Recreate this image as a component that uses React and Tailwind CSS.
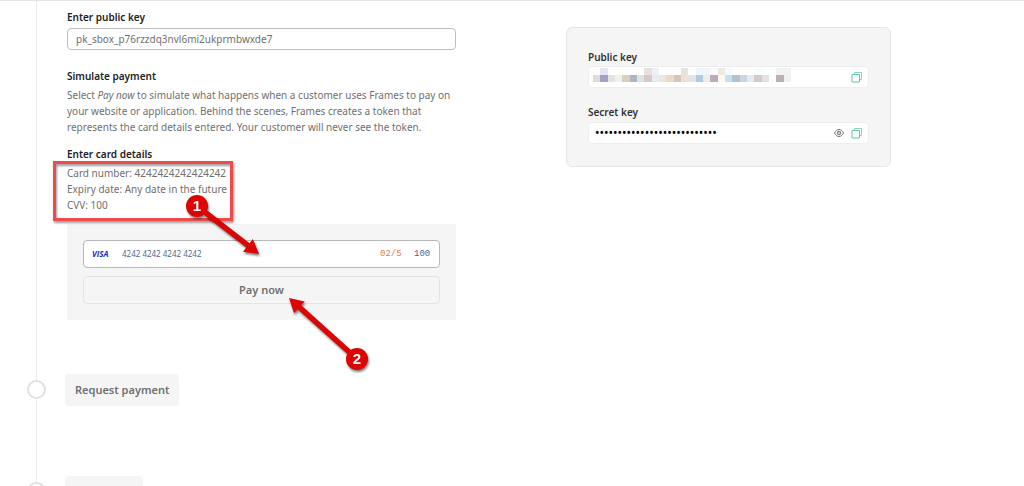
import { useState } from "react"

// colour strips that hide the public key, one entry per block
const MOSAIC_TOP = [
  "#fefefe", "#e6e6f2", "#ffffff", "#fefef4", "#ffffff", "#ffffff", "#ffffff", "#e6e2e2", "#eef0f6",
  "#ffffff", "#ffffff", "#fefefe", "#e6e2de", "#ffffff", "#ecf6fe", "#f2f6fa", "#fafafe", "#eeeae2",
  "#f4fafe", "#ffffff", "#ffffff", "#ffffff", "#fafcfe", "#ffffff", "#ffffff", "#f2f2f0", "#f2f2f0",
]
const MOSAIC_BOTTOM = [
  "#dedcd6", "#a2a2c6", "#e6e2de", "#e8f6f0", "#dacec0", "#b0b4c4", "#dce4e4", "#dac8c8", "#e6ecf2",
  "#ece6de", "#eadaca", "#d6c6b6", "#ece2d8", "#e4e4e4", "#b4cae0", "#eeeee8", "#bcaaba", "#fefaf2",
  "#c2e2f0", "#b0c2d2", "#ccd4e0", "#e4ecf2", "#d6cac6", "#e2e2e0", "#fcfefe", "#bab0b6", "#f0f0f0",
]

function CopyIcon() {
  return (
    <svg viewBox="0 0 12 12" className="w-3 h-3" fill="none" stroke="#5cc4a0">
      <path d="M3.5 3V1.5h7v7H9" strokeOpacity="0.7" />
      <rect x="1" y="3.5" width="7.5" height="7.5" rx="0.5" />
    </svg>
  )
}

function EyeIcon() {
  return (
    <svg viewBox="0 0 12 12" className="w-3 h-3" fill="none" stroke="#666666" strokeWidth="0.9">
      <path d="M1.5 6C2.6 3.6 4.2 2.5 6 2.5S9.4 3.6 10.5 6C9.4 8.4 7.8 9.5 6 9.5S2.6 8.4 1.5 6z" />
      <circle cx="6" cy="6" r="1.8" />
      <circle cx="6" cy="6" r="0.3" />
    </svg>
  )
}

function Arrow({ className, from, to, label }) {
  const angle = Math.atan2(to[1] - from[1], to[0] - from[0])
  const length = Math.hypot(to[0] - from[0], to[1] - from[1])
  const deg = (angle * 180) / Math.PI
  return (
    <svg
      className={`absolute pointer-events-none overflow-visible drop-shadow-[1px_2px_1px_rgba(0,0,0,0.5)] ${className}`}
      viewBox="0 0 80 80"
      fill="#dc0404"
    >
      <g transform={`translate(${from[0]} ${from[1]}) rotate(${deg})`}>
        <path d={`M0 -2.7H${length - 14}V-8L${length} 0L${length - 14} 8V2.7H0z`} />
      </g>
      <circle cx={from[0]} cy={from[1]} r="11" />
      <text x={from[0]} y={from[1] + 5} textAnchor="middle" fill="white"
        className="font-['Liberation_Sans',sans-serif] text-[15px] font-bold">
        {label}
      </text>
    </svg>
  )
}

function Step({ children, marker, last }) {
  return (
    <div className={last ? "flex grow" : "flex"}>
      <div className="relative w-16 shrink-0">
        <div className="absolute inset-y-0 left-9 border-l border-[#ebebeb]"></div>
        {marker && (
          <div className="absolute left-[27px] top-[6px] w-[19px] h-[19px] rounded-full border-2 border-[#e2e2e2] bg-white"></div>
        )}
      </div>
      {children}
    </div>
  )
}

function KeyPanel() {
  const [shown, setShown] = useState(false)
  return (
    <aside className="mt-[26px] ml-[110px] w-[325px] shrink-0 self-start bg-[#f5f5f5] border border-[#e6e6e6] rounded-md px-[21px] pt-[21px] pb-[22px]">
      <h3 className="leading-4 font-semibold text-[#333]">Public key</h3>
      <div className="mt-px h-[22px] flex items-center bg-white border border-[#eeeeee] rounded-sm pr-[5px]">
        <div className="w-[202px] pl-1 pb-1">
          <div className="flex h-[7px]">
            {MOSAIC_TOP.map((c, i) => <span key={i} className="flex-1" style={{ background: c }}></span>)}
          </div>
          <div className="flex h-[7px]">
            {MOSAIC_BOTTOM.map((c, i) => <span key={i} className="flex-1" style={{ background: c }}></span>)}
          </div>
        </div>
        <button aria-label="Copy public key" className="ml-auto"><CopyIcon /></button>
      </div>
      <label htmlFor="secret" className="block mt-4 leading-4 font-semibold text-[#333]">Secret key</label>
      <div className="mt-[2px] h-[22px] flex items-center gap-[6px] bg-white border border-[#eeeeee] rounded-sm pl-[6px] pr-[5px]">
        <input id="secret" type={shown ? "text" : "password"} readOnly defaultValue="000000000000000000000000000"
          className="flex-1 min-w-0 text-[12px] text-black outline-none" />
        <button aria-label="Show secret key" onClick={() => setShown(!shown)}><EyeIcon /></button>
        <button aria-label="Copy secret key"><CopyIcon /></button>
      </div>
    </aside>
  )
}

export default function App() {
  return (
    <main className="flex flex-col h-screen overflow-hidden bg-white border-t border-[#e4e4e4] font-['Noto_Sans',sans-serif] text-[10px] leading-4 text-[#707070]">
      <Step>
        <div className="relative w-[392px] shrink-0 pl-[3px] pt-2 pb-[54px]">
          <label htmlFor="pk" className="block font-semibold text-[#222]">Enter public key</label>
          <input id="pk" defaultValue="pk_sbox_p76rzzdq3nvl6mi2ukprmbwxde7"
            className="block w-full h-[22px] mt-[3px] px-2 border border-[#bdbdbd] rounded-sm outline-none" />

          <h2 className="mt-[18px] font-semibold text-[#222]">Simulate payment</h2>
          <p className="mt-[3px]">
            Select <em>Pay now</em> to simulate what happens when a customer uses Frames to pay on
            your website or application. Behind the scenes, Frames creates a token that
            represents the card details entered. Your customer will never see the token.
          </p>

          <h2 className="mt-[11px] font-semibold text-[#222]">Enter card details</h2>
          <div className="relative mt-[3px]">
            <p>Card number: 4242424242424242</p>
            <p>Expiry date: Any date in the future</p>
            <p>CVV: 100</p>
            <div className="absolute -left-[14px] -top-[4px] w-[180px] h-[60px] border-[3px] border-[#f04a4a] drop-shadow-[1px_2px_1px_rgba(0,0,0,0.4)]"></div>
          </div>

          <form className="mt-[11px] p-4 bg-[#f5f5f5]" onSubmit={(e) => e.preventDefault()}>
            <div className="flex items-center h-7 px-2 bg-white border border-[#b8b8b8] rounded-sm font-['Liberation_Mono',monospace] text-[9px] text-[#52688c]">
              <svg viewBox="0 0 22 12" className="w-[22px] h-3 shrink-0">
                <text x="0" y="9" fill="#1f2bc8" className="font-['Open_Sans',sans-serif] text-[8px] font-bold italic">VISA</text>
              </svg>
              <input aria-label="Card number" defaultValue="4242 4242 4242 4242"
                className="ml-2 flex-1 min-w-0 font-['Noto_Sans',sans-serif] text-[8px] outline-none" />
              <input aria-label="Expiry date" defaultValue="02/5" className="w-[34px] text-[#e07a50] outline-none" />
              <input aria-label="CVV" defaultValue="100" className="w-[17px] outline-none" />
            </div>
            <button className="block w-full h-7 mt-2 border border-[#e4e4e4] rounded-sm text-[11px] font-semibold">Pay now</button>
          </form>

          <Arrow className="left-[120px] top-[190px] w-20 h-20" label="1" from={[13, 15]} to={[75, 63]} />
          <Arrow className="left-[220px] top-[290px] w-20 h-20" label="2" from={[73, 68]} to={[5, 7]} />
        </div>
        <KeyPanel />
      </Step>
      <Step marker>
        <div className="pl-px pb-[70px]">
          <button className="h-8 px-[10px] bg-[#f5f5f5] rounded-sm text-[11px] font-semibold">Request payment</button>
        </div>
      </Step>
      <Step marker last>
        <div className="pl-px">
          <div className="w-[78px] h-8 bg-[#f5f5f5] rounded-sm"></div>
        </div>
      </Step>
    </main>
  )
}
